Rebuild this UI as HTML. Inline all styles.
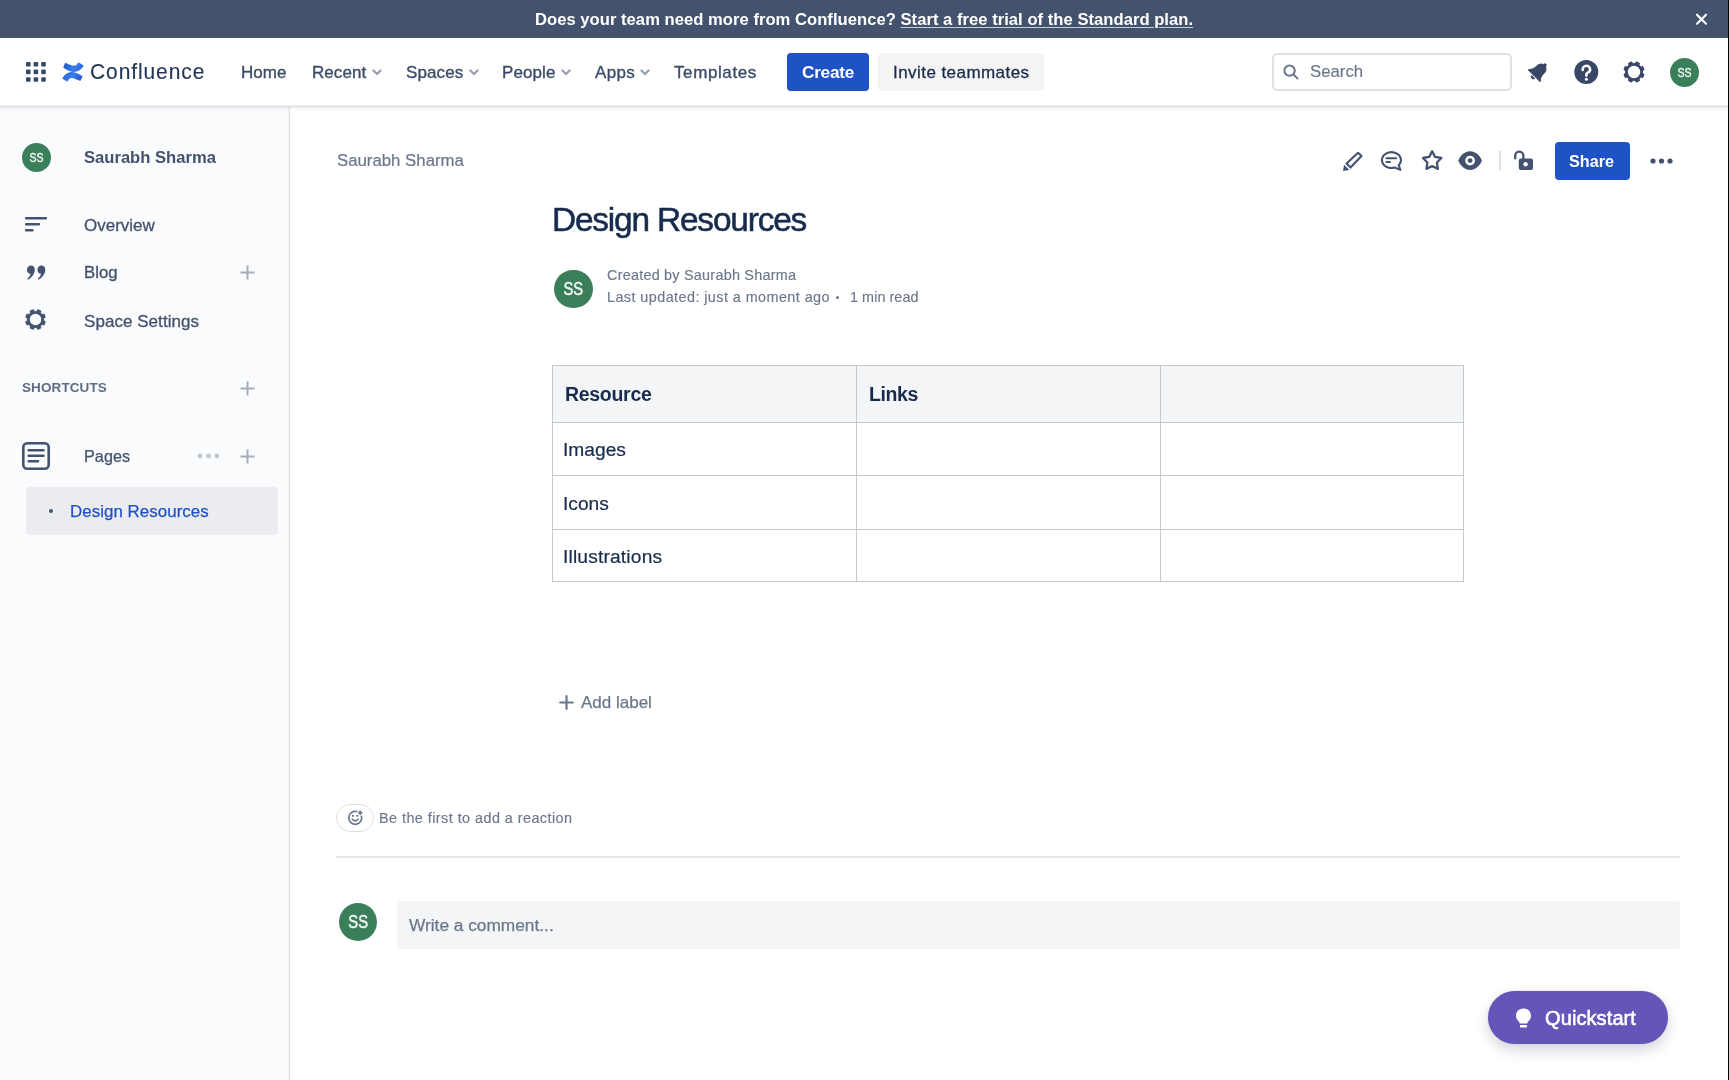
<!DOCTYPE html>
<html><head><meta charset="utf-8"><title>Design Resources - Confluence</title>
<style>
html,body{margin:0;padding:0;width:1729px;height:1080px;overflow:hidden;background:#fff;font-family:"Liberation Sans",sans-serif;}
.t{position:absolute;line-height:1;white-space:nowrap;will-change:transform;}
.r{position:absolute;display:block;}
</style></head><body>
<div class="r" style="left:0px;top:0px;width:1729px;height:38px;background:#44536D"></div>
<div class="t" style="left:535.4px;top:11.85px;font-size:16.6px;font-weight:700;color:#FFFFFF;letter-spacing:0.03px;">Does your team need more from Confluence? <span style="text-decoration:underline;text-decoration-color:#C7CCD6;text-underline-offset:2px">Start a free trial of the Standard plan.</span></div>
<svg class="r" style="left:1695px;top:13px;" width="13" height="13" viewBox="0 13 13"><path d="M2 1.7L11 10.7M11 1.7L2 10.7" stroke="#fff" stroke-width="2.2" stroke-linecap="round"/></svg>
<div class="r" style="left:0px;top:38px;width:1729px;height:67px;background:#fff"></div>
<div class="r" style="left:0px;top:105px;width:1729px;height:1px;background:#F0F1F3"></div>
<div class="r" style="left:0px;top:106px;width:1729px;height:1px;background:#DCDFE4;z-index:5"></div>
<div class="r" style="left:0px;top:107px;width:1729px;height:4px;background:linear-gradient(rgba(9,30,66,0.07),rgba(9,30,66,0));z-index:5"></div>
<svg class="r" style="left:26px;top:62px;" width="20" height="20" viewBox="0 0 20 20"><rect x="0.0" y="0.0" width="4.6" height="4.6" rx="1.2" fill="#384765"/><rect x="7.6" y="0.0" width="4.6" height="4.6" rx="1.2" fill="#384765"/><rect x="15.2" y="0.0" width="4.6" height="4.6" rx="1.2" fill="#384765"/><rect x="0.0" y="7.6" width="4.6" height="4.6" rx="1.2" fill="#384765"/><rect x="7.6" y="7.6" width="4.6" height="4.6" rx="1.2" fill="#384765"/><rect x="15.2" y="7.6" width="4.6" height="4.6" rx="1.2" fill="#384765"/><rect x="0.0" y="15.2" width="4.6" height="4.6" rx="1.2" fill="#384765"/><rect x="7.6" y="15.2" width="4.6" height="4.6" rx="1.2" fill="#384765"/><rect x="15.2" y="15.2" width="4.6" height="4.6" rx="1.2" fill="#384765"/></svg>
<svg class="r" style="left:58px;top:58px;" width="30" height="28" viewBox="0 0 30 28"><defs><linearGradient id="lg1" x1="0" y1="0" x2="1" y2="0.3"><stop offset="0" stop-color="#1D50C4"/><stop offset="0.6" stop-color="#3B7BEA"/><stop offset="1" stop-color="#2F6BDD"/></linearGradient><linearGradient id="lg2" x1="1" y1="1" x2="0" y2="0.7"><stop offset="0" stop-color="#1D50C4"/><stop offset="0.6" stop-color="#3B7BEA"/><stop offset="1" stop-color="#2F6BDD"/></linearGradient></defs><path d="M7.26 4.8C10 6 14 7.8 16.07 7.78C18 7.7 19.5 6 20.48 4.15L25.67 7.52C23.5 11.8 19.5 14.2 14.52 13.9C11 13.6 8 11.7 5.19 9.59Z" fill="url(#lg1)"/><path d="M4.28 20.48C6.5 16.3 10 14 14.5 14.1C18 14.3 21.5 16.3 24.63 18.41L22.3 23.07C19.5 21.8 16 20.1 13.48 19.96C11.8 19.9 10.5 21.5 9.33 23.72Z" fill="url(#lg2)"/></svg>
<div class="t" style="left:90.3px;top:61.12px;font-size:21px;font-weight:400;color:#253858;letter-spacing:0.9px;-webkit-text-stroke:0.15px #253858;transform:scaleY(1.07);transform-origin:0 85%;">Confluence</div>
<div class="t" style="left:240.8px;top:63.61px;font-size:17px;font-weight:400;color:#3B4B68;letter-spacing:0.03px;-webkit-text-stroke:0.35px #3B4B68;">Home</div>
<div class="t" style="left:311.9px;top:63.61px;font-size:17px;font-weight:400;color:#3B4B68;letter-spacing:0.05px;-webkit-text-stroke:0.35px #3B4B68;">Recent</div>
<svg class="r" style="left:372px;top:68.8px;" width="10" height="7" viewBox="0 0 10 7"><path d="M1.5 1.5L5 5L8.5 1.5" stroke="#97A0AF" stroke-width="2.3" fill="none" stroke-linecap="round" stroke-linejoin="round"/></svg>
<div class="t" style="left:405.5px;top:63.61px;font-size:17px;font-weight:400;color:#3B4B68;letter-spacing:0.1px;-webkit-text-stroke:0.35px #3B4B68;">Spaces</div>
<svg class="r" style="left:469px;top:68.8px;" width="10" height="7" viewBox="0 0 10 7"><path d="M1.5 1.5L5 5L8.5 1.5" stroke="#97A0AF" stroke-width="2.3" fill="none" stroke-linecap="round" stroke-linejoin="round"/></svg>
<div class="t" style="left:502.1px;top:63.61px;font-size:17px;font-weight:400;color:#3B4B68;letter-spacing:0.1px;-webkit-text-stroke:0.35px #3B4B68;">People</div>
<svg class="r" style="left:561px;top:68.8px;" width="10" height="7" viewBox="0 0 10 7"><path d="M1.5 1.5L5 5L8.5 1.5" stroke="#97A0AF" stroke-width="2.3" fill="none" stroke-linecap="round" stroke-linejoin="round"/></svg>
<div class="t" style="left:594.8px;top:63.61px;font-size:17px;font-weight:400;color:#3B4B68;letter-spacing:0.3px;-webkit-text-stroke:0.35px #3B4B68;">Apps</div>
<svg class="r" style="left:640px;top:68.8px;" width="10" height="7" viewBox="0 0 10 7"><path d="M1.5 1.5L5 5L8.5 1.5" stroke="#97A0AF" stroke-width="2.3" fill="none" stroke-linecap="round" stroke-linejoin="round"/></svg>
<div class="t" style="left:674.1px;top:63.61px;font-size:17px;font-weight:400;color:#3B4B68;letter-spacing:0.6px;-webkit-text-stroke:0.35px #3B4B68;">Templates</div>
<div class="r" style="left:787px;top:53px;width:82px;height:38px;background:#1F52C5;border-radius:4px"></div>
<div class="t" style="left:802.2px;top:64.34px;font-size:17.2px;font-weight:700;color:#fff;letter-spacing:-0.25px;">Create</div>
<div class="r" style="left:878px;top:53px;width:166px;height:38px;background:#F4F4F5;border-radius:4px"></div>
<div class="t" style="left:893.1px;top:63.71px;font-size:17px;font-weight:400;color:#172B4D;letter-spacing:0.44px;-webkit-text-stroke:0.3px #172B4D;">Invite teammates</div>
<div class="r" style="left:1272px;top:53px;width:239.5px;height:37.5px;border:2px solid #DFE1E6;border-radius:5px;box-sizing:border-box;background:#fff"></div>
<svg class="r" style="left:1283px;top:64px;" width="16" height="16" viewBox="0 0 16 16"><circle cx="6.6" cy="6.6" r="5.2" stroke="#6B778C" stroke-width="2" fill="none"/><path d="M10.6 10.6L14.5 14.5" stroke="#6B778C" stroke-width="2" stroke-linecap="round"/></svg>
<div class="t" style="left:1310.4px;top:64.18px;font-size:16.8px;font-weight:400;color:#6B778C;letter-spacing:0px;-webkit-text-stroke:0.15px #6B778C;">Search</div>
<svg class="r" style="left:1522px;top:56px;" width="32" height="32" viewBox="0 0 32 32"><g transform="translate(12.3 19.7) rotate(45) translate(-8 -17)"><path d="M-0.3 17C1.5 15.3 3 13.3 3 10L3 7.6C3 4.7 5.2 2.4 8 2.4C10.8 2.4 13 4.7 13 7.6L13 10C13 13.3 14.5 15.3 16.3 17Z" fill="#384765" stroke="#384765" stroke-width="1" stroke-linejoin="round"/><circle cx="8" cy="1.9" r="1.7" fill="#384765"/><path d="M5.5 18.4A2.5 2.5 0 0 0 10.5 18.4Z" fill="#384765"/></g></svg>
<svg class="r" style="left:1574px;top:60px;" width="25" height="25" viewBox="0 0 25 25"><circle cx="12.3" cy="12.1" r="12" fill="#384765"/><path d="M8.7 9.9C8.7 7.6 10.3 5.8 12.4 5.8C14.5 5.8 16.1 7.4 16.1 9.4C16.1 11.2 14.9 12.3 13.5 12.9C12.8 13.2 12.4 13.7 12.4 14.5V15.6" stroke="#fff" stroke-width="2.6" fill="none" stroke-linecap="round" stroke-linejoin="round"/><circle cx="12.4" cy="19.3" r="1.5" fill="#fff"/></svg>
<svg class="r" style="left:1623px;top:61px;" width="22" height="22" viewBox="0 0 22 22"><defs><mask id="gm1"><rect x="0" y="0" width="40" height="40" fill="#000"/><circle cx="11" cy="11" r="9.0" fill="#fff"/><rect x="8.65" y="0.30" width="4.7" height="3.20" rx="1.3" transform="rotate(22.5 11 11)" fill="#fff"/><rect x="8.65" y="0.30" width="4.7" height="3.20" rx="1.3" transform="rotate(67.5 11 11)" fill="#fff"/><rect x="8.65" y="0.30" width="4.7" height="3.20" rx="1.3" transform="rotate(112.5 11 11)" fill="#fff"/><rect x="8.65" y="0.30" width="4.7" height="3.20" rx="1.3" transform="rotate(157.5 11 11)" fill="#fff"/><rect x="8.65" y="0.30" width="4.7" height="3.20" rx="1.3" transform="rotate(202.5 11 11)" fill="#fff"/><rect x="8.65" y="0.30" width="4.7" height="3.20" rx="1.3" transform="rotate(247.5 11 11)" fill="#fff"/><rect x="8.65" y="0.30" width="4.7" height="3.20" rx="1.3" transform="rotate(292.5 11 11)" fill="#fff"/><rect x="8.65" y="0.30" width="4.7" height="3.20" rx="1.3" transform="rotate(337.5 11 11)" fill="#fff"/><circle cx="11" cy="11" r="6.2" fill="#000"/></mask></defs><rect x="0" y="0" width="40" height="40" fill="#384765" mask="url(#gm1)"/></svg>
<div class="r" style="left:1670.1px;top:57.5px;width:29px;height:29px;background:#3B7F5A;border-radius:50%"></div>
<div class="r" style="left:1670.1px;top:57.5px;width:29px;height:29px;line-height:29px;text-align:center;color:#F0F5F2;font-size:12.8px;font-weight:400;letter-spacing:0px;transform:scaleX(0.82);-webkit-text-stroke:0.38px #F0F5F2">SS</div>
<div class="r" style="left:1728px;top:0px;width:1px;height:1080px;background:#000;z-index:10"></div>
<div class="r" style="left:0px;top:107px;width:289px;height:973px;background:#FAFBFC"></div>
<div class="r" style="left:288px;top:107px;width:1px;height:973px;background:#F1F2F3"></div>
<div class="r" style="left:289px;top:107px;width:1px;height:973px;background:#E3E4E6"></div>
<div class="r" style="left:21.700000000000003px;top:142.5px;width:29px;height:29px;background:#3B7F5A;border-radius:50%"></div>
<div class="r" style="left:21.700000000000003px;top:142.5px;width:29px;height:29px;line-height:29px;text-align:center;color:#F0F5F2;font-size:12.8px;font-weight:400;letter-spacing:0px;transform:scaleX(0.82);-webkit-text-stroke:0.38px #F0F5F2">SS</div>
<div class="t" style="left:84.4px;top:150.15px;font-size:16.6px;font-weight:700;color:#42526E;letter-spacing:0px;">Saurabh Sharma</div>
<svg class="r" style="left:25px;top:217px;" width="22" height="15" viewBox="0 0 22 15"><path d="M1 1.3H21M1 7.3H14M1 13.3H7.5" stroke="#43526E" stroke-width="2.4" stroke-linecap="round"/></svg>
<div class="t" style="left:84.4px;top:216.91px;font-size:17px;font-weight:400;color:#42526E;letter-spacing:0px;-webkit-text-stroke:0.3px #42526E;">Overview</div>
<svg class="r" style="left:27px;top:265px;" width="19" height="16" viewBox="0 0 19 16"><path d="M4 0.5c2.4 0 3.8 1.7 3.8 4 0 4.5-3.2 8.3-6.8 10.2l-.7-.9c1.9-1.5 3-3.3 3.2-5C1.4 8.7 0 7.3 0 4.8 0 2.2 1.8.5 4 .5z M14.5 .5c2.4 0 3.8 1.7 3.8 4 0 4.5-3.2 8.3-6.8 10.2l-.7-.9c1.9-1.5 3-3.3 3.2-5-2.1-.1-3.5-1.5-3.5-4C10.5 2.2 12.3.5 14.5.5z" fill="#43526E"/></svg>
<div class="t" style="left:84.2px;top:265.48px;font-size:16.8px;font-weight:400;color:#42526E;letter-spacing:0px;-webkit-text-stroke:0.3px #42526E;">Blog</div>
<svg class="r" style="left:240px;top:265px;" width="15" height="15" viewBox="0 0 15 15"><path d="M7.5 0.5V14.5M0.5 7.5H14.5" stroke="#A5ADBA" stroke-width="2"/></svg>
<svg class="r" style="left:25px;top:309px;" width="21" height="21" viewBox="0 0 21 21"><defs><mask id="gm2"><rect x="0" y="0" width="40" height="40" fill="#000"/><circle cx="10.5" cy="10.5" r="8.6" fill="#fff"/><rect x="8.20" y="0.05" width="4.6" height="3.35" rx="1.3" transform="rotate(22.5 10.5 10.5)" fill="#fff"/><rect x="8.20" y="0.05" width="4.6" height="3.35" rx="1.3" transform="rotate(67.5 10.5 10.5)" fill="#fff"/><rect x="8.20" y="0.05" width="4.6" height="3.35" rx="1.3" transform="rotate(112.5 10.5 10.5)" fill="#fff"/><rect x="8.20" y="0.05" width="4.6" height="3.35" rx="1.3" transform="rotate(157.5 10.5 10.5)" fill="#fff"/><rect x="8.20" y="0.05" width="4.6" height="3.35" rx="1.3" transform="rotate(202.5 10.5 10.5)" fill="#fff"/><rect x="8.20" y="0.05" width="4.6" height="3.35" rx="1.3" transform="rotate(247.5 10.5 10.5)" fill="#fff"/><rect x="8.20" y="0.05" width="4.6" height="3.35" rx="1.3" transform="rotate(292.5 10.5 10.5)" fill="#fff"/><rect x="8.20" y="0.05" width="4.6" height="3.35" rx="1.3" transform="rotate(337.5 10.5 10.5)" fill="#fff"/><circle cx="10.5" cy="10.5" r="5.8" fill="#000"/></mask></defs><rect x="0" y="0" width="40" height="40" fill="#43526E" mask="url(#gm2)"/></svg>
<div class="t" style="left:84.4px;top:312.51px;font-size:17px;font-weight:400;color:#42526E;letter-spacing:0.05px;-webkit-text-stroke:0.3px #42526E;">Space Settings</div>
<div class="t" style="left:22.1px;top:381.37px;font-size:13.5px;font-weight:700;color:#5E6C84;letter-spacing:0.1px;">SHORTCUTS</div>
<svg class="r" style="left:240px;top:380.5px;" width="15" height="15" viewBox="0 0 15 15"><path d="M7.5 0.5V14.5M0.5 7.5H14.5" stroke="#A5ADBA" stroke-width="2"/></svg>
<svg class="r" style="left:22px;top:442px;" width="28" height="28" viewBox="0 0 28 28"><rect x="1.3" y="1.3" width="25.4" height="25.4" rx="4" stroke="#43526E" stroke-width="2.6" fill="none"/><path d="M6.7 8.3H21.5M6.7 13.8H21.5M6.7 19.2H16" stroke="#43526E" stroke-width="2.6" stroke-linecap="round"/></svg>
<div class="t" style="left:83.8px;top:447.89px;font-size:16.2px;font-weight:400;color:#42526E;letter-spacing:0.05px;-webkit-text-stroke:0.25px #42526E;">Pages</div>
<svg class="r" style="left:197px;top:453px;" width="23" height="6" viewBox="0 0 23 6"><circle cx="3" cy="3" r="2.4" fill="#C1C7D0"/><circle cx="11.5" cy="3" r="2.4" fill="#C1C7D0"/><circle cx="20" cy="3" r="2.4" fill="#C1C7D0"/></svg>
<svg class="r" style="left:240px;top:448.5px;" width="15" height="15" viewBox="0 0 15 15"><path d="M7.5 0.5V14.5M0.5 7.5H14.5" stroke="#A5ADBA" stroke-width="2"/></svg>
<div class="r" style="left:26px;top:487px;width:252px;height:48px;background:#EBECF0;border-radius:4px"></div>
<div class="r" style="left:48.6px;top:508.9px;width:4px;height:4px;background:#43526E;border-radius:50%"></div>
<div class="t" style="left:70.0px;top:503.89px;font-size:16.9px;font-weight:400;color:#1F52C5;letter-spacing:0.05px;-webkit-text-stroke:0.25px #1F52C5;">Design Resources</div>
<div class="t" style="left:336.5px;top:152.58px;font-size:16.8px;font-weight:400;color:#6B778C;letter-spacing:0px;-webkit-text-stroke:0.2px #6B778C;">Saurabh Sharma</div>
<svg class="r" style="left:1343px;top:151px;" width="22" height="22" viewBox="0 0 22 22"><path d="M15 1.75L18.5 5.1L7.5 16.5L3.6 12.6Z" stroke="#43526E" stroke-width="2.1" fill="none" stroke-linejoin="round"/><path d="M0.4 19.6L1.3 14.2L5.8 18.7Z" fill="#43526E" stroke="#43526E" stroke-width="0.6" stroke-linejoin="round"/></svg>
<svg class="r" style="left:1380px;top:151px;" width="23" height="22" viewBox="0 0 23 22"><path d="M14.7 16.52A9.5 7.9 0 1 1 18.73 14.18L20.3 18.9Z" stroke="#43526E" stroke-width="2.1" fill="none" stroke-linejoin="round"/><path d="M6.5 7.3H16.2M6.5 10.9H9.9" stroke="#43526E" stroke-width="2" stroke-linecap="round"/></svg>
<svg class="r" style="left:1422px;top:150px;" width="21" height="22" viewBox="0 0 21 22"><path d="M10.15 1.30 L13.11 6.92 L19.38 8.00 L14.95 12.56 L15.85 18.85 L10.15 16.04 L4.45 18.85 L5.35 12.56 L0.92 8.00 L7.19 6.92Z" stroke="#43526E" stroke-width="2.3" fill="none" stroke-linejoin="round"/></svg>
<svg class="r" style="left:1458px;top:151px;" width="25" height="20" viewBox="0 0 25 20"><path d="M0.4 9.6C1.2 6 6 0.2 12.1 0.2C18.2 0.2 23 6 23.8 9.6C23 13.2 18.2 19 12.1 19C6 19 1.2 13.2 0.4 9.6Z" fill="#43526E"/><circle cx="12.1" cy="9.6" r="4.9" fill="#fff"/><circle cx="12.1" cy="9.6" r="2.4" fill="#43526E"/></svg>
<div class="r" style="left:1498.5px;top:151px;width:2px;height:19px;background:#DFE1E6"></div>
<svg class="r" style="left:1513px;top:150px;" width="21" height="21" viewBox="0 0 21 21"><path d="M2.2 8.4V5.8C2.2 3.3 4 1.6 6.3 1.6C8.6 1.6 10.4 3.3 10.4 5.8V8.6" stroke="#43526E" stroke-width="2.3" fill="none" stroke-linecap="round"/><rect x="5.8" y="8.4" width="14.2" height="11.6" rx="2" fill="#43526E"/><circle cx="12.6" cy="14.2" r="2.2" fill="#fff"/></svg>
<div class="r" style="left:1554.5px;top:141.5px;width:75px;height:38.5px;background:#1F52C5;border-radius:4px"></div>
<div class="t" style="left:1569.0px;top:153.29px;font-size:16.2px;font-weight:700;color:#fff;letter-spacing:0px;">Share</div>
<svg class="r" style="left:1649.5px;top:157.8px;" width="23" height="6" viewBox="0 0 23 6"><circle cx="3" cy="3" r="2.6" fill="#43526E"/><circle cx="11.5" cy="3" r="2.6" fill="#43526E"/><circle cx="20" cy="3" r="2.6" fill="#43526E"/></svg>
<div class="t" style="left:551.9px;top:202.93px;font-size:33.4px;font-weight:400;color:#172B4D;letter-spacing:-1.17px;-webkit-text-stroke:0.55px #172B4D;">Design Resources</div>
<div class="r" style="left:554.15px;top:269.65px;width:38.7px;height:38.7px;background:#3B7F5A;border-radius:50%"></div>
<div class="r" style="left:554.15px;top:269.65px;width:38.7px;height:38.7px;line-height:38.7px;text-align:center;color:#F0F5F2;font-size:18px;font-weight:400;letter-spacing:0px;transform:scaleX(0.82);-webkit-text-stroke:0.54px #F0F5F2">SS</div>
<div class="t" style="left:607.0px;top:267.91px;font-size:14.4px;font-weight:400;color:#6B778C;letter-spacing:0.24px;-webkit-text-stroke:0.15px #6B778C;">Created by Saurabh Sharma</div>
<div class="t" style="left:607.0px;top:290.21px;font-size:14.4px;font-weight:400;color:#6B778C;letter-spacing:0.43px;-webkit-text-stroke:0.15px #6B778C;">Last updated: just a moment ago</div>
<div class="r" style="left:835.8px;top:296.3px;width:3px;height:3px;background:#6B778C;border-radius:50%"></div>
<div class="t" style="left:850.3px;top:290.21px;font-size:14.4px;font-weight:400;color:#6B778C;letter-spacing:0.05px;-webkit-text-stroke:0.15px #6B778C;">1 min read</div>
<div class="r" style="left:552px;top:365px;width:912px;height:57px;background:#F4F5F7"></div>
<div class="r" style="left:552px;top:365px;width:912px;height:1px;background:#C3C8D0"></div>
<div class="r" style="left:552px;top:422px;width:912px;height:1px;background:#C3C8D0"></div>
<div class="r" style="left:552px;top:475px;width:912px;height:1px;background:#C3C8D0"></div>
<div class="r" style="left:552px;top:529px;width:912px;height:1px;background:#C3C8D0"></div>
<div class="r" style="left:552px;top:581px;width:912px;height:1px;background:#C3C8D0"></div>
<div class="r" style="left:552px;top:365px;width:1px;height:217px;background:#C3C8D0"></div>
<div class="r" style="left:856px;top:365px;width:1px;height:217px;background:#C3C8D0"></div>
<div class="r" style="left:1159.5px;top:365px;width:1px;height:217px;background:#C3C8D0"></div>
<div class="r" style="left:1463px;top:365px;width:1px;height:217px;background:#C3C8D0"></div>
<div class="t" style="left:565.3px;top:385.09px;font-size:19.5px;font-weight:700;color:#172B4D;letter-spacing:-0.3px;">Resource</div>
<div class="t" style="left:869px;top:385.09px;font-size:19.5px;font-weight:700;color:#172B4D;letter-spacing:-0.4px;">Links</div>
<div class="t" style="left:562.8px;top:440.35px;font-size:19.2px;font-weight:400;color:#172B4D;letter-spacing:0px;-webkit-text-stroke:0.2px #172B4D;">Images</div>
<div class="t" style="left:562.8px;top:493.55px;font-size:19.2px;font-weight:400;color:#172B4D;letter-spacing:0px;-webkit-text-stroke:0.2px #172B4D;">Icons</div>
<div class="t" style="left:562.8px;top:546.75px;font-size:19.2px;font-weight:400;color:#172B4D;letter-spacing:0.17px;-webkit-text-stroke:0.2px #172B4D;">Illustrations</div>
<svg class="r" style="left:559px;top:694.8px;" width="15" height="15" viewBox="0 0 15 15"><path d="M7.5 1.2V13.8M1.2 7.5H13.8" stroke="#6B778C" stroke-width="2.2" stroke-linecap="round"/></svg>
<div class="t" style="left:580.9px;top:694.11px;font-size:17px;font-weight:400;color:#6B778C;letter-spacing:0px;-webkit-text-stroke:0.25px #6B778C;">Add label</div>
<div class="r" style="left:336.3px;top:803.6px;width:38px;height:28px;border:1.5px solid #DFE1E6;border-radius:14px;box-sizing:border-box"></div>
<svg class="r" style="left:340px;top:802px;" width="30" height="30" viewBox="0 0 30 30"><path d="M21.53 14.34A6.5 6.5 0 1 1 16.66 9.47" stroke="#6B778C" stroke-width="1.7" fill="none" stroke-linecap="round"/><circle cx="13" cy="13.8" r="1.15" fill="#6B778C"/><circle cx="17.3" cy="13.8" r="1.15" fill="#6B778C"/><path d="M12.4 17.2Q15.2 20.4 18 17.2" stroke="#6B778C" stroke-width="1.7" fill="none" stroke-linecap="round"/><path d="M20.2 8.6Q20.7 10.3 22.4 10.8Q20.7 11.3 20.2 13Q19.7 11.3 18 10.8Q19.7 10.3 20.2 8.6Z" fill="#6B778C" stroke="#6B778C" stroke-width="0.8" stroke-linejoin="round"/></svg>
<div class="t" style="left:379.4px;top:810.91px;font-size:14.4px;font-weight:400;color:#6B778C;letter-spacing:0.45px;-webkit-text-stroke:0.15px #6B778C;">Be the first to add a reaction</div>
<div class="r" style="left:336px;top:856px;width:1344px;height:1.5px;background:#E4E6EA"></div>
<div class="r" style="left:338.6px;top:902.8px;width:38.4px;height:38.4px;background:#3B7F5A;border-radius:50%"></div>
<div class="r" style="left:338.6px;top:902.8px;width:38.4px;height:38.4px;line-height:38.4px;text-align:center;color:#F0F5F2;font-size:18px;font-weight:400;letter-spacing:0px;transform:scaleX(0.82);-webkit-text-stroke:0.54px #F0F5F2">SS</div>
<div class="r" style="left:397px;top:901px;width:1283px;height:47.5px;background:#F4F5F7;border-radius:4px"></div>
<div class="t" style="left:409.4px;top:916.96px;font-size:17.3px;font-weight:400;color:#6B778C;letter-spacing:0px;-webkit-text-stroke:0.25px #6B778C;">Write a comment...</div>
<div class="r" style="left:1487.5px;top:991px;width:180.5px;height:53px;background:#6356B8;border-radius:27px;box-shadow:0 6px 14px rgba(9,30,66,0.18),0 0 2px rgba(9,30,66,0.1)"></div>
<svg class="r" style="left:1515px;top:1008px;" width="17" height="20" viewBox="0 0 17 20"><path d="M8.5 0.5c4.3 0 7.5 3.1 7.5 7.2 0 2.6-1.4 4.4-2.8 5.8-.6.6-.9 1.2-.9 2H4.7c0-.8-.3-1.4-.9-2C2.4 12.1 1 10.3 1 7.7 1 3.6 4.2.5 8.5.5z" fill="#fff"/><rect x="5" y="17" width="7" height="2.4" rx=".6" fill="#fff"/></svg>
<div class="t" style="left:1545.4px;top:1008.07px;font-size:20px;font-weight:400;color:#fff;letter-spacing:0.1px;-webkit-text-stroke:0.6px #fff;">Quickstart</div>

</body></html>
